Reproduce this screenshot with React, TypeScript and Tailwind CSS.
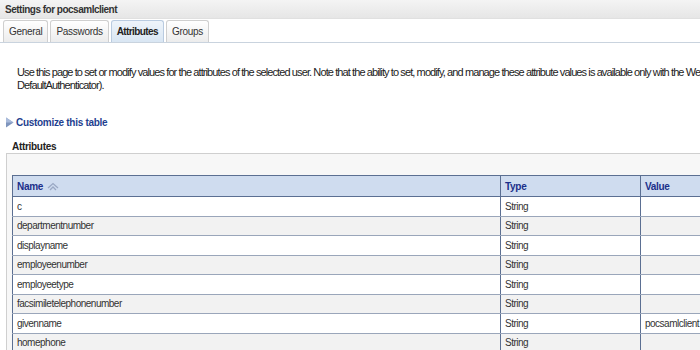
const rows: [string, string, string][] = [
  ["c", "String", ""],
  ["departmentnumber", "String", ""],
  ["displayname", "String", ""],
  ["employeenumber", "String", ""],
  ["employeetype", "String", ""],
  ["facsimiletelephonenumber", "String", ""],
  ["givenname", "String", "pocsamlclient"],
  ["homephone", "String", ""],
];

const tabs = ["General", "Passwords", "Attributes", "Groups"];

function SortIcon() {
  return (
    <svg width="12" height="9" viewBox="0 0 12 9" className="ml-1 inline-block">
      <path d="M1 6 L6 1.5 L11 6" fill="none" stroke="#9aa8c4" strokeWidth="1.3" />
      <path d="M3 8 L6 5 L9 8" fill="none" stroke="#9aa8c4" strokeWidth="1.3" />
    </svg>
  );
}

export default function App() {
  return (
    <div
      className="w-[700px] h-[350px] overflow-hidden bg-white text-[#222]"
      style={{ fontFamily: '"Liberation Sans", Arial, sans-serif' }}
    >
      {/* title bar */}
      <div className="h-[19px] bg-gradient-to-b from-[#f4f4f4] to-[#e6e6e6] border-b border-[#e0e0e0] px-[5px] flex items-center">
        <span className="text-[10px] font-bold tracking-[-0.5px] text-[#333]">Settings for pocsamlclient</span>
      </div>

      {/* tabs */}
      <div className="flex items-end gap-[2px] pl-[3px] border-b border-[#c9d3de] h-[24px]">
        {tabs.map((t) => {
          const active = t === "Attributes";
          return (
            <div
              key={t}
              className={
                active
                  ? "h-[22px] px-[5px] flex items-center rounded-t-[3px] border border-b-0 border-[#b9cbe0] bg-gradient-to-b from-[#eef4fa] to-[#d9e6f3] text-[10px] font-bold tracking-[-0.6px] text-[#222]"
                  : "h-[22px] px-[5px] flex items-center rounded-t-[3px] border border-b-0 border-[#cfcfcf] bg-gradient-to-b from-[#ffffff] to-[#ececec] text-[10px] tracking-[-0.3px] text-[#333]"
              }
            >
              {t}
            </div>
          );
        })}
      </div>

      {/* description */}
      <div className="pl-[17px] pt-[23px] text-[11px] leading-[13px] tracking-[-0.9px] text-[#222] whitespace-nowrap">
        <p>
          Use this page to set or modify values for the attributes of the selected user. Note that the ability to set, modify, and manage these attribute values is available only with the WebLogic Authentication provider (
        </p>
        <p>DefaultAuthenticator).</p>
      </div>

      {/* customize link */}
      <div className="flex items-center pl-[5px] mt-[23px] h-[14px]">
        <svg width="9" height="11" viewBox="0 0 9 11" className="mr-[2px]">
          <path d="M1 0.5 L8.5 5.5 L1 10.5 Z" fill="#7f95bd" />
          <path d="M1 0.5 L8.5 5.5 L1 5.5 Z" fill="#a9bbdb" />
        </svg>
        <span className="text-[10px] font-bold tracking-[-0.3px] text-[#1f3f8f]">Customize this table</span>
      </div>

      {/* section heading */}
      <div className="pl-[12px] mt-[10px] text-[10px] font-bold tracking-[-0.3px] text-[#222]">Attributes</div>

      {/* table panel */}
      <div className="ml-[6px] -mt-[1px] border-l border-t border-[#cfcfcf] bg-[#f7f7f7] pt-[21px] pl-[5px]">
        <table className="border-collapse text-[10px] tracking-[-0.5px] w-[720px] table-fixed bg-white">
          <colgroup>
            <col className="w-[488px]" />
            <col className="w-[140px]" />
            <col className="w-[92px]" />
          </colgroup>
          <thead>
            <tr className="h-[21px] bg-[#cfdcef]">
              <th className="border border-[#5b6f92] text-left pl-[4px] font-bold tracking-[-0.3px] text-[#1b2f8a]">
                <span className="inline-flex items-center">
                  Name
                  <SortIcon />
                </span>
              </th>
              <th className="border border-[#5b6f92] text-left pl-[4px] font-bold tracking-[-0.3px] text-[#1b2f8a]">Type</th>
              <th className="border border-[#5b6f92] text-left pl-[4px] font-bold tracking-[-0.3px] text-[#1b2f8a]">Value</th>
            </tr>
          </thead>
          <tbody>
            {rows.map(([n, t, v], i) => (
              <tr key={n} className={i % 2 === 0 ? "h-[19.5px] bg-white" : "h-[19.5px] bg-[#f2f2f2]"}>
                <td className="border-y border-[#9aa6ba] border-l border-l-[#5b6f92] pl-[4px] text-[#333]">{n}</td>
                <td className="border-y border-[#9aa6ba] border-l border-l-[#5b6f92] pl-[4px] text-[#333]">{t}</td>
                <td className="border-y border-[#9aa6ba] border-l border-l-[#5b6f92] pl-[4px] text-[#333]">{v}</td>
              </tr>
            ))}
          </tbody>
        </table>
      </div>
    </div>
  );
}
